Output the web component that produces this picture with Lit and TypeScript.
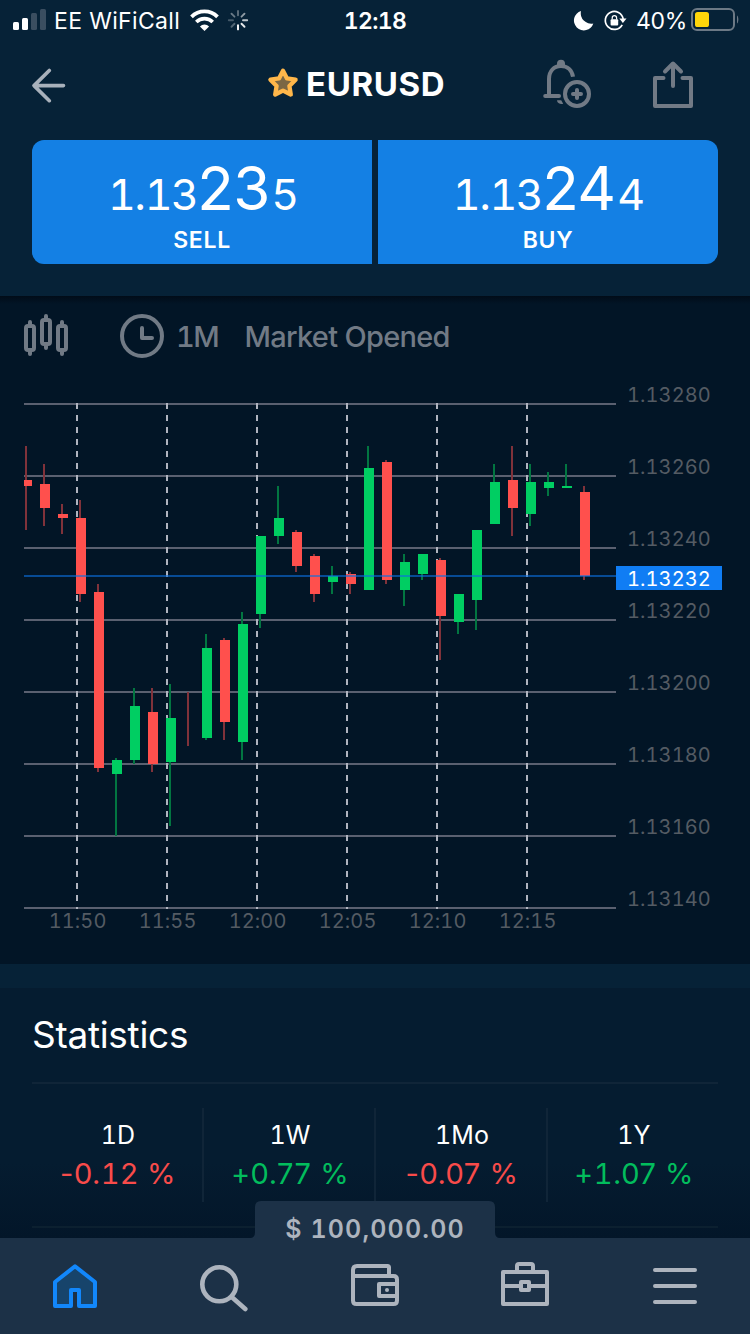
import { LitElement, html, svg, css } from "lit";
import { customElement, property } from "lit/decorators.js";

type Candle = {
  x: number;
  up: boolean;
  high: number;
  low: number;
  top: number;
  bottom: number;
};

// x is the left edge of the candle body; all values are chart pixels.
const c = (x: number, up: boolean, high: number, low: number, top: number, bottom: number): Candle => ({
  x, up, high, low, top, bottom,
});

const CANDLES: Candle[] = [
  c(22, false, 446, 530, 480, 486),
  c(40, false, 464, 526, 484, 508),
  c(58, false, 504, 534, 514, 518),
  c(76, false, 500, 602, 518, 594),
  c(94, false, 584, 772, 592, 768),
  c(112, true, 758, 836, 760, 774),
  c(130, true, 688, 764, 706, 760),
  c(148, false, 688, 772, 712, 764),
  c(166, true, 684, 826, 718, 762),
  c(184, false, 692, 746, 692, 692),
  c(202, true, 634, 740, 648, 738),
  c(220, false, 638, 740, 640, 722),
  c(238, true, 612, 760, 624, 742),
  c(256, true, 536, 628, 536, 614),
  c(274, true, 486, 544, 518, 536),
  c(292, false, 530, 572, 532, 566),
  c(310, false, 554, 602, 556, 594),
  c(328, true, 566, 594, 576, 582),
  c(346, false, 572, 594, 574, 584),
  c(364, true, 446, 590, 468, 590),
  c(382, false, 460, 584, 462, 580),
  c(400, true, 554, 606, 562, 590),
  c(418, true, 554, 580, 554, 574),
  c(436, false, 558, 660, 560, 616),
  c(454, true, 594, 634, 594, 622),
  c(472, true, 530, 630, 530, 600),
  c(490, true, 464, 524, 482, 524),
  c(508, false, 446, 536, 480, 508),
  c(526, true, 464, 526, 482, 514),
  c(544, true, 472, 496, 482, 488),
  c(562, true, 464, 488, 486, 488),
  c(580, false, 486, 580, 492, 576),
];

const PRICES = ["1.13280", "1.13260", "1.13240", "1.13220", "1.13200", "1.13180", "1.13160", "1.13140"];
const TIMES = ["11:50", "11:55", "12:00", "12:05", "12:10", "12:15"];

// Gives each "1" the full digit width while the other glyphs stay proportional.
const wideOnes = (text: string) =>
  text.split(/(1)/).map((part) => (part === "1" ? html`<span class="one">1</span>` : part));

@customElement("status-bar")
export class StatusBar extends LitElement {
  static styles = css`
    :host { display: grid; grid-template-columns: 1fr auto 1fr; height: 42px; color: #fff; }
    .side { display: flex; align-items: stretch; }
    .left { padding-left: 13px; }
    .right { justify-content: flex-end; padding-right: 11px; }
    svg { display: block; }
    .text { font-size: 23px; line-height: 42px; white-space: nowrap; }
    .carrier { margin-left: 7px; width: 136px; letter-spacing: 0.35px; }
    .time { font-weight: 600; letter-spacing: -0.6px; font-variant-numeric: tabular-nums; }
    .percent { margin-left: 9px; width: 54px; letter-spacing: -0.3px; }
  `;

  render() {
    const rays = [0.35, 0.55, 0.75, 0.9, 1, 0.3, 0.25, 0.4];
    return html`
      <div class="side left">
        <svg width="34" height="42" viewBox="13 0 34 42">
          <rect x="13" y="22" width="6" height="8" rx="1.5" fill="#fff" />
          <rect x="22" y="18" width="6" height="12" rx="1.5" fill="#fff" />
          <rect x="31" y="13" width="6" height="17" rx="1.5" fill="#3a4e60" />
          <rect x="40" y="9" width="6" height="21" rx="1.5" fill="#3a4e60" />
        </svg>
        <div class="text carrier">EE WiFiCall</div>
        <svg width="60" height="42" viewBox="190 0 60 42" fill="none">
          <path d="M191.5 16.8a18.4 18.4 0 0 1 26 0" stroke="#fff" stroke-width="3.8" />
          <path d="M196.3 22a11.6 11.6 0 0 1 16.4 0" stroke="#fff" stroke-width="3.6" />
          <path d="M204.5 31l-4.6-4.5a6.4 6.4 0 0 1 9.2 0z" fill="#fff" />
          ${rays.map(
            (o, i) => svg`<path d="M238 15.2V11" stroke="#fff" stroke-width="1.9" stroke-linecap="round"
              opacity=${o} transform=${`rotate(${i * 45} 238 20.2)`} />`
          )}
        </svg>
      </div>
      <div class="text time">12:18</div>
      <div class="side right">
        <svg width="54" height="42" viewBox="573 0 54 42">
          <path d="M581 11a9.9 9.9 0 1 0 12.3 12.4A10.4 10.4 0 0 1 581 11z" fill="#fff" />
          <path d="M622.2 24.8a9 9 0 1 1 1-5.8" fill="none" stroke="#fff" stroke-width="1.7" />
          <path d="M619.3 18.5h7.2l-3.6 4.6z" fill="#fff" />
          <rect x="610.6" y="19.3" width="7.6" height="6.2" rx="1" fill="#fff" />
          <path d="M612.2 19.5v-1.6a2.2 2.2 0 0 1 4.4 0v1.6" fill="none" stroke="#fff" stroke-width="1.2" />
        </svg>
        <div class="text percent">40%</div>
        <svg width="49" height="42" viewBox="690 0 49 42">
          <rect x="692" y="9" width="42" height="21" rx="5" fill="none" stroke="#6c7985" stroke-width="2" />
          <rect x="695" y="12" width="14" height="15" rx="2.6" fill="#ffd60a" />
          <path d="M737 15.5c1.8.8 1.8 7.200 0 8z" fill="#6c7985" />
        </svg>
      </div>
    `;
  }
}

@customElement("nav-header")
export class NavHeader extends LitElement {
  static styles = css`
    :host { display: flex; align-items: center; height: 84px; padding: 0 56px 0 32px; }
    svg { display: block; flex: none; }
    .star { margin-left: 201px; }
    h1 { margin: 0 0 0 7px; font-size: 33px; line-height: 84px; font-weight: 700; color: #fff; letter-spacing: 0.6px; }
    .bell { margin-left: auto; }
    .share { margin-left: 60px; }
  `;

  render() {
    return html`
      <svg width="34" height="84" viewBox="32 42 34 84" fill="none" stroke="#a8b1bb" stroke-width="3.6"
        stroke-linecap="round" stroke-linejoin="round">
        <path d="M49.300 70.500L34 85.600L49.300 100.700M34 85.600H63.500" />
      </svg>
      <svg class="star" width="32" height="84" viewBox="267 42 32 84">
        <path d="M283 70.700L287 78.400L295.600 79.700L289.400 85.900L290.800 94.500L283 90.600L275.200 94.500L276.600 85.900L270.400 79.700L279 78.400Z"
          fill="#7b6744" stroke="#ffb74a" stroke-width="4.300" stroke-linejoin="round" />
      </svg>
      <h1>EURUSD</h1>
      <svg class="bell" width="49" height="84" viewBox="543 42 49 84" fill="none" stroke="#717a85" stroke-width="4"
        stroke-linecap="round">
        <path d="M549 95V79C549 71 554 66 561 66C567.500 66 572 70.500 573 76.800" stroke-linecap="butt" />
        <path d="M557 65v-1.500a4 3.800 0 0 1 8 0V65z" fill="#717a85" stroke="none" />
        <path d="M545.200 96H559" />
        <path d="M557 100.200h4.200l2 3.600c-3 .8-6-.6-6.200-3.600z" fill="#717a85" stroke="none" />
        <circle cx="577" cy="94" r="12" />
        <path d="M577 90v8M573 94h8" />
      </svg>
      <svg class="share" width="42" height="84" viewBox="652 42 42 84" fill="none" stroke="#717a85" stroke-width="4"
        stroke-linecap="round" stroke-linejoin="round">
        <path d="M663.500 78H655v28h36V78h-8.500M673 86V64M665 71.500l8-8 8 8" />
      </svg>
    `;
  }
}

@customElement("trade-button")
export class TradeButton extends LitElement {
  @property() lead = "";
  @property() pips = "";
  @property() tail = "";
  @property() label = "";

  static styles = css`
    :host { display: block; flex: 1; height: 112px; padding-top: 12px; background: #1480e4; color: #fff; text-align: center; }
    .price { font-size: 60px; line-height: 72px; height: 72px; white-space: nowrap; }
    .price span { line-height: 1; }
    .one { font-variant-numeric: tabular-nums; }
    .small { font-size: 43px; font-weight: 400; letter-spacing: -1.7px; }
    .pips { font-weight: 400; letter-spacing: -0.7px; margin: 0 2px 0 1.5px; }
    .label { font-size: 23px; line-height: 33px; font-weight: 600; letter-spacing: 0.7px; }
  `;

  render() {
    return html`
      <div class="price"><span class="small">${wideOnes(this.lead)}</span><span class="pips">${this.pips}</span><span class="small">${this.tail}</span></div>
      <div class="label">${this.label}</div>
    `;
  }
}

@customElement("price-chart")
export class PriceChart extends LitElement {
  static styles = css`
    :host { display: block; height: 668px; background: linear-gradient(#010c18 0, #021526 8px); }
    .tools { display: flex; align-items: center; height: 80px; padding-left: 24px; color: #717a85; font-size: 29px; line-height: 81px; font-weight: 500; }
    svg { display: block; flex: none; }
    .clock { margin-left: 51px; }
    .frame { margin-left: 12px; width: 68.5px; font-variant-numeric: tabular-nums; letter-spacing: -1.5px; }
    .state { letter-spacing: -0.7px; }
    text { font-size: 20px; letter-spacing: 0.1px; font-variant-numeric: tabular-nums; }
    .axis { fill: #545b63; }
    .current { fill: #fff; }
  `;

  render() {
    return html`
      <div class="tools">
        <svg width="45" height="80" viewBox="24 296 45 80" fill="none" stroke="#717a85" stroke-width="4">
          <rect x="26" y="326" width="8" height="24" rx="2" />
          <rect x="42" y="320" width="8" height="24" rx="2" />
          <rect x="58" y="326" width="8" height="24" rx="2" />
          <path d="M30 322v2M30 352v2M46 316v2M46 346v2M62 322v2M62 352v2" stroke-linecap="round" />
        </svg>
        <svg class="clock" width="44" height="80" viewBox="120 296 44 80" fill="none" stroke="#717a85" stroke-width="4"
          stroke-linecap="round" stroke-linejoin="round">
          <circle cx="142" cy="336" r="20" />
          <path d="M142 328v10h10" />
        </svg>
        <div class="frame">1M</div>
        <div class="state">Market Opened</div>
      </div>
      <svg width="750" height="588" viewBox="0 376 750 588" shape-rendering="crispEdges">
        ${PRICES.map(
          (p, i) => svg`
            <rect x="24" y=${403 + i * 72} width="592" height="2" fill="#5a6070" />
            <text class="axis" x="627" y=${402.4 + i * 72}>${p}</text>`
        )}
        ${TIMES.map(
          (t, i) => svg`
            <path d=${`M${77 + i * 90} 403V909`} stroke="#b0b4bf" stroke-width="2" stroke-dasharray="6 6" />
            <text class="axis" x=${77.6 + i * 90} y="928" text-anchor="middle">${t}</text>`
        )}
        ${CANDLES.map((k) => {
          const left = Math.max(k.x, 24);
          return svg`
            <rect x=${k.x + 3} y=${k.high} width="2" height=${k.low - k.high} fill=${k.up ? "#027541" : "#80323a"} />
            <rect x=${left} y=${k.top} width=${k.x + 10 - left} height=${k.bottom - k.top}
              fill=${k.up ? "#00ce62" : "#ff504d"} />`;
        })}
        <rect x="24" y="575" width="592" height="2" fill="#0b6fe0" fill-opacity="0.6" />
        <rect x="616" y="566" width="106" height="24" fill="#107df4" />
        <text class="current" x="627" y="586">1.13232</text>
      </svg>
    `;
  }
}

@customElement("stats-panel")
export class StatsPanel extends LitElement {
  static styles = css`
    :host { display: block; height: 250px; padding: 0 32px; background: linear-gradient(#051c30 0, #051c30 70%, #031629 100%); }
    h2 { margin: 0; height: 94px; line-height: 94px; font-size: 37px; font-weight: 400; letter-spacing: -0.3px; color: #fff; border-bottom: 2px solid #102538; }
    .row { display: grid; grid-template-columns: repeat(4, 172px); margin-top: 24px; }
    .cell { height: 86px; padding: 8px 0 0 2px; text-align: center; border-right: 2px solid #102538; }
    .cell:last-child { border-right-color: transparent; }
    .one { font-variant-numeric: tabular-nums; }
    .period { font-size: 25px; line-height: 38px; height: 37px; color: #fff; letter-spacing: 0.1px; }
    .value { font-size: 29px; line-height: 41px; letter-spacing: 0.5px; white-space: nowrap; }
    .down { color: #f84b4a; }
    .up { color: #02bd5d; }
    .rule { height: 2px; margin-top: 24px; background: #0c2030; }
  `;

  render() {
    const stats: [string, string][] = [
      ["1D", "-0.12 %"],
      ["1W", "+0.77 %"],
      ["1Mo", "-0.07 %"],
      ["1Y", "+1.07 %"],
    ];
    return html`
      <h2>Statistics</h2>
      <div class="row">
        ${stats.map(
          ([period, value]) => html`
            <div class="cell">
              <div class="period">${wideOnes(period)}</div>
              <div class="value ${value.startsWith("-") ? "down" : "up"}">${wideOnes(value)}</div>
            </div>`
        )}
      </div>
      <div class="rule"></div>
    `;
  }
}

@customElement("tab-bar")
export class TabBar extends LitElement {
  static styles = css`
    :host { display: grid; grid-template-columns: repeat(5, 1fr); height: 96px; background: #1c3147; position: relative; }
    .item { display: grid; place-items: center; }
    svg { display: block; }
    .balance { position: absolute; left: 250px; top: -37px; width: 250px; height: 56px; text-align: center; }
    .balance svg { position: absolute; left: 0; top: 0; }
    .amount { position: relative; font-size: 25px; line-height: 56px; font-weight: 600; color: #adb4be; letter-spacing: 1.15px; font-variant-numeric: tabular-nums; }
  `;

  render() {
    const icon = (x: number, body: unknown, color = "#adb4be") => html`
      <div class="item">
        <svg width="52" height="52" viewBox=${`${x - 26} 1260 52 52`} fill="none" stroke=${color} stroke-width="4"
          stroke-linejoin="round" stroke-linecap="round">${body}</svg>
      </div>`;
    return html`
      ${icon(75, svg`<path d="M75 1266.300L95 1282V1306H79V1290H71V1306H55V1282Z" fill="#17446b" />`, "#1287fb")}
      ${icon(225, svg`<circle cx="219.300" cy="1284.300" r="17" stroke-width="4.600" />
        <path d="M232 1297.200L245.300 1309" stroke-width="4.600" />`)}
      ${icon(375, svg`<path d="M389 1275V1267.500Q389 1266 387.500 1266H357Q353 1266 353 1270V1300.500Q353 1304 356.500 1304H393.500Q397 1304 397 1300.500V1279.500Q397 1276 393.500 1276H355M397 1284H379V1296H397" />
        <circle cx="387" cy="1290" r="2" fill="#adb4be" stroke="none" />`)}
      ${icon(525, svg`<path d="M503 1272H547V1304H503ZM517 1272V1266Q517 1264 519 1264H531Q533 1264 533 1266V1272M503 1286H521M529 1286H547M521 1282H529V1290H521Z" />`)}
      ${icon(675, svg`<path d="M655 1270H695M655 1286H695M655 1302H695" />`)}
      <div class="balance">
        <svg width="250" height="38" viewBox="0 0 250 38">
          <path d="M0 37Q5 37 5 31V6Q5 0 11 0H239Q245 0 245 6V31Q245 37 250 37V38H0Z" fill="#1c3147" />
        </svg>
        <div class="amount">$ 100,000.00</div>
      </div>
    `;
  }
}

@customElement("app-root")
export class AppRoot extends LitElement {
  static styles = css`
    :host { display: flex; flex-direction: column; width: 750px; height: 1334px; overflow: hidden; background: #062237; font-family: Inter, "Liberation Sans", sans-serif; }
    .quotes { display: flex; gap: 6px; margin: 14px 32px 32px; border-radius: 12px; overflow: hidden; flex: none; }
    price-chart { margin-bottom: 24px; }
    status-bar, nav-header, price-chart, stats-panel, tab-bar { flex: none; box-sizing: border-box; }
  `;

  render() {
    return html`
      <status-bar></status-bar>
      <nav-header></nav-header>
      <div class="quotes">
        <trade-button lead="1.13" pips="23" tail="5" label="SELL"></trade-button>
        <trade-button lead="1.13" pips="24" tail="4" label="BUY"></trade-button>
      </div>
      <price-chart></price-chart>
      <stats-panel></stats-panel>
      <tab-bar></tab-bar>
    `;
  }
}
